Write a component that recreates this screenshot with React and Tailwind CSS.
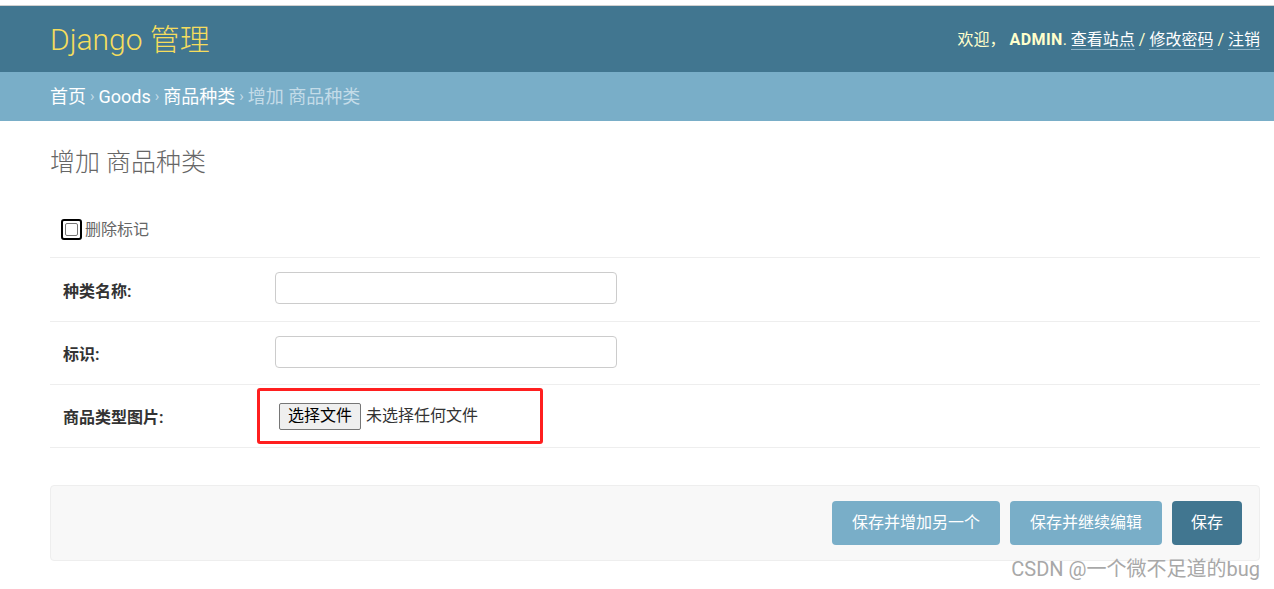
import React from "react";

const font = { fontFamily: "Roboto, 'Noto Sans CJK SC', sans-serif" };

function Row({ label, children }) {
  return (
    <div className="flex items-center h-[64px] border-b border-[#eee] pl-[13px]">
      <div className="w-[212px] text-[16px] font-bold text-[#333] mt-[4px]">{label}</div>
      {children}
    </div>
  );
}

export default function App() {
  return (
    <div className="w-[1274px] h-[589px] bg-white overflow-hidden relative" style={font}>
      <div className="h-[6px] bg-white border-b border-[#d0d0d0]" />
      <div className="h-[66px] bg-[#417690] flex items-center justify-between pl-[50px] pr-[14px]">
        <div className="text-[30px] text-[#f5dd5d] font-light leading-none mt-[2px]">Django 管理</div>
        <div className="text-[16px] text-[#ffc] mt-[1px]">
          欢迎，&nbsp;<span className="font-bold tracking-wide">ADMIN</span>.{" "}
          <span className="text-white border-b border-[#8fb4c8]">查看站点</span> /{" "}
          <span className="text-white border-b border-[#8fb4c8]">修改密码</span> /{" "}
          <span className="text-white border-b border-[#8fb4c8]">注销</span>
        </div>
      </div>
      <div className="h-[49px] bg-[#79aec8] flex items-center pl-[50px] text-[18px] text-white">
        <span>首页</span>
        <span className="mx-[4px] text-[#c4dce8] text-[15px]">›</span>
        <span>Goods</span>
        <span className="mx-[4px] text-[#c4dce8] text-[15px]">›</span>
        <span>商品种类</span>
        <span className="mx-[4px] text-[#c4dce8] text-[15px]">›</span>
        <span className="text-[#c4dce8]">增加 商品种类</span>
      </div>

      <div className="px-[50px] pr-[14px]">
        <h1 className="text-[25px] font-light text-[#666] mt-[26px] leading-[32px]">增加 商品种类</h1>
        <div className="flex items-center mt-[40px] pl-[11px] pb-[17px] border-b border-[#eee]">
          <span className="w-[21px] h-[21px] border-[2px] border-black rounded-[3px] flex items-center justify-center">
            <span className="w-[13px] h-[13px] border border-[#767676] rounded-[2px]" />
          </span>
          <span className="ml-[3px] text-[16px] text-[#666] leading-[21px]">删除标记</span>
        </div>
        <Row label="种类名称:">
          <div className="w-[342px] h-[32px] border border-[#ccc] rounded-[4px] bg-white mb-[3px]" />
        </Row>
        <div className="[&>div]:h-[63px]">
          <Row label="标识:">
            <div className="w-[342px] h-[32px] border border-[#ccc] rounded-[4px] bg-white mb-[3px]" />
          </Row>
          <Row label="商品类型图片:">
            <div className="ml-[-18px] w-[286px] h-[56px] border-[3px] border-[#ff1f1f] rounded-[3px] flex items-center pl-[19px]">
              <span className="h-[27px] px-[8px] flex items-center text-[16px] text-black bg-[#efefef] border border-[#767676] rounded-[2px]">选择文件</span>
              <span className="ml-[5px] text-[16px] text-[#333]">未选择任何文件</span>
            </div>
          </Row>
        </div>

        <div className="mt-[37px] h-[76px] bg-[#f8f8f8] border border-[#eee] rounded-[4px] flex items-center justify-end pr-[17px] gap-[10px]">
          <span className="h-[44px] w-[168px] bg-[#79aec8] rounded-[4px] text-white text-[16px] flex items-center justify-center">保存并增加另一个</span>
          <span className="h-[44px] w-[152px] bg-[#79aec8] rounded-[4px] text-white text-[16px] flex items-center justify-center">保存并继续编辑</span>
          <span className="h-[44px] w-[70px] bg-[#417690] rounded-[4px] text-white text-[16px] flex items-center justify-center">保存</span>
        </div>
        <div className="absolute right-[14px] top-[555px] text-[20px] text-[#a8a8a8] leading-[28px]">CSDN @一个微不足道的bug</div>
      </div>
    </div>
  );
}
